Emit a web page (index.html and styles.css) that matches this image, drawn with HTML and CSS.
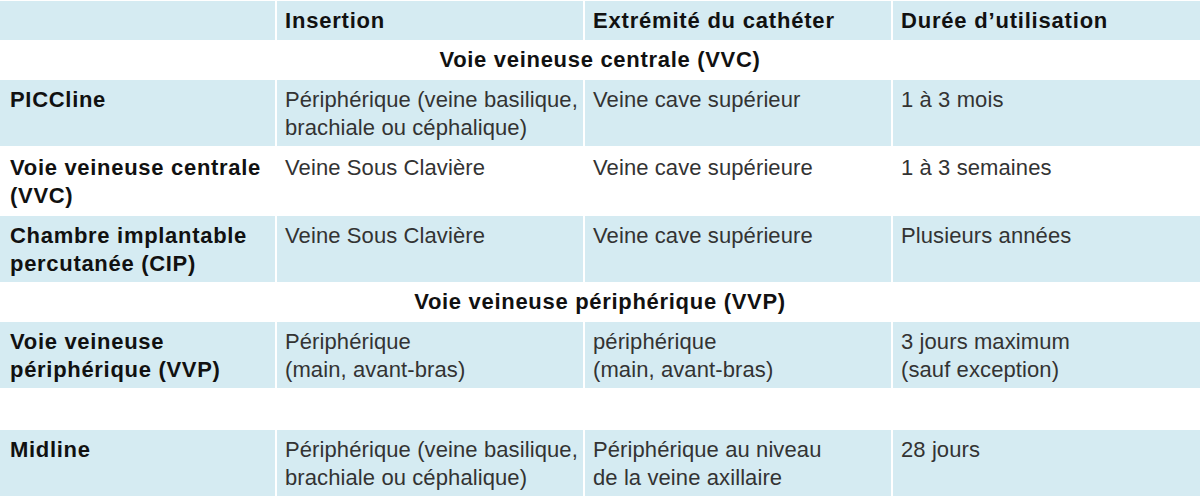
FILE: index.html
```html
<!DOCTYPE html>
<html lang="fr">
<head>
<meta charset="utf-8">
<title>Voies veineuses</title>
<link rel="stylesheet" href="styles.css">
</head>
<body>
<div class="grid">
  <div class="cell head"></div>
  <div class="cell head">Insertion</div>
  <div class="cell head">Extrémité du cathéter</div>
  <div class="cell head">Durée d’utilisation</div>

  <div class="section">Voie veineuse centrale (VVC)</div>

  <div class="cell name blue">PICCline</div>
  <div class="cell blue">Périphérique (veine basilique,<br>brachiale ou céphalique)</div>
  <div class="cell blue">Veine cave supérieur</div>
  <div class="cell blue">1 à 3 mois</div>

  <div class="cell name">Voie veineuse centrale<br>(VVC)</div>
  <div class="cell">Veine Sous Clavière</div>
  <div class="cell">Veine cave supérieure</div>
  <div class="cell">1 à 3 semaines</div>

  <div class="cell name blue">Chambre implantable<br>percutanée (CIP)</div>
  <div class="cell blue">Veine Sous Clavière</div>
  <div class="cell blue">Veine cave supérieure</div>
  <div class="cell blue">Plusieurs années</div>

  <div class="section">Voie veineuse périphérique (VVP)</div>

  <div class="cell name blue">Voie veineuse<br>périphérique (VVP)</div>
  <div class="cell blue">Périphérique<br>(main, avant-bras)</div>
  <div class="cell blue">périphérique<br>(main, avant-bras)</div>
  <div class="cell blue">3 jours maximum<br>(sauf exception)</div>

  <div class="spacer"></div>

  <div class="cell name blue">Midline</div>
  <div class="cell blue">Périphérique (veine basilique,<br>brachiale ou céphalique)</div>
  <div class="cell blue">Périphérique au niveau<br>de la veine axillaire</div>
  <div class="cell blue">28 jours</div>
</div>
</body>
</html>
```

FILE: styles.css
```css
html, body {
  margin: 0;
  padding: 0;
  background: #ffffff;
}

body {
  font-family: "Liberation Sans", Arial, sans-serif;
  font-size: 22px;
  color: #333333;
}

.grid {
  display: grid;
  grid-template-columns: 275px 306px 306px 1fr;
  column-gap: 2px;
  row-gap: 2px;
  padding-top: 1px;
}

.cell {
  height: 66px;
  box-sizing: border-box;
  padding: 6px 0 4px 8px;
  line-height: 28px;
  letter-spacing: 0.1px;
  white-space: nowrap;
  overflow: hidden;
}

.blue {
  background: #d5ebf2;
}

.head {
  height: 39px;
  padding: 0 8px;
  display: flex;
  align-items: center;
  background: #d5ebf2;
  font-weight: bold;
  color: #111111;
  letter-spacing: 0.8px;
}

.name {
  padding-left: 10px;
  font-weight: bold;
  color: #111111;
  letter-spacing: 0.7px;
}

.section {
  grid-column: 1 / -1;
  height: 36px;
  display: flex;
  align-items: center;
  justify-content: center;
  font-weight: bold;
  color: #111111;
  letter-spacing: 0.7px;
}

.spacer {
  grid-column: 1 / -1;
  height: 38px;
}
```
